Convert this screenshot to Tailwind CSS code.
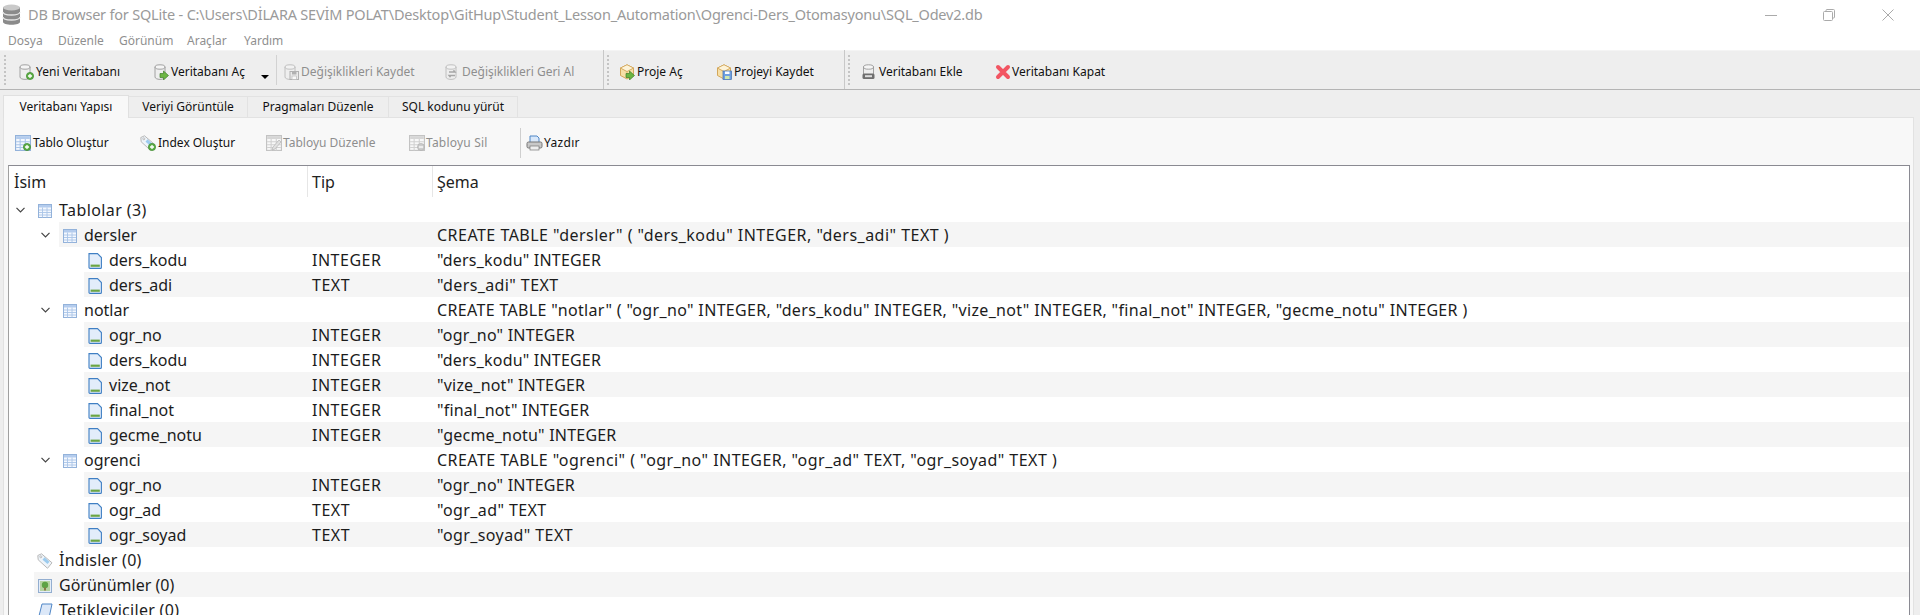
<!DOCTYPE html>
<html lang="tr"><head><meta charset="utf-8"><title>DB Browser for SQLite</title>
<script src="https://cdn.jsdelivr.net/npm/@tailwindcss/browser@4"></script></head>
<body class="w-[1920px] h-[615px] overflow-hidden bg-[#eeeeee] font-['Noto_Sans',sans-serif] text-[#111]">
<svg class="hidden" width="0" height="0">
<defs>
<linearGradient id="c" x1="0" x2="1" y1="0" y2="0"><stop offset="0" stop-color="#c4c4c4"/><stop offset=".5" stop-color="#f6f6f6"/><stop offset="1" stop-color="#b4b4b4"/></linearGradient>
<symbol id="db" viewBox="0 0 16 16"><path d="M2 3v10c0 1.3 2.2 2.4 5 2.4s5-1.100 5-2.400V3z" fill="url(#c)" stroke="#8d8d8d" stroke-width=".8"/><ellipse cx="7" cy="3" rx="5" ry="2.200" fill="#f5f5f5" stroke="#8d8d8d" stroke-width=".8"/></symbol>
<symbol id="plus" viewBox="0 0 16 16"><circle cx="12" cy="12" r="3.600" fill="#5fae46" stroke="#3b8a2c" stroke-width=".7"/><path d="M10 12h4M12 10v4" stroke="#fff" stroke-width="1.300"/></symbol>
<symbol id="arrow" viewBox="0 0 16 16"><path d="M7 9.500h3.500V7l5 4.500-5 4.500v-2.500H7z" fill="#6cb543" stroke="#3f7f2a" stroke-width=".7"/></symbol>
<symbol id="tbl" viewBox="1 1 14 14"><rect x="1.500" y="1.500" width="13" height="13" fill="#f4f8fe" stroke="#93b2da"/><rect x="2" y="2" width="12" height="2.500" fill="#b4cced"/><path d="M2 7h12M2 9.500h12M2 12h12M5.500 4.500v10M10 4.500v10" stroke="#a9c4e8" stroke-width=".9"/></symbol>
<symbol id="fld" viewBox="0 0 14 16"><path d="M1 .6h8.500L13.400 4.500v9.900a1 1 0 0 1-1 1H2a1 1 0 0 1-1-1z" fill="#e3edfa" stroke="#3f7fc4" stroke-width="1.100"/><rect x="2.600" y="11.600" width="9.200" height="2.200" fill="#6ba544"/></symbol>
<symbol id="tag" viewBox="0 0 16 16"><path d="M.8 2.500 4.500.8l10.500 9-4.500 5.500L1.200 6.800z" fill="#eef4fa" stroke="#b8b8b8"/><circle cx="3.800" cy="3.800" r="1" fill="#fff" stroke="#999" stroke-width=".6"/><path d="M6.500 5.500l5 4.300" stroke="#9ccbee" stroke-width="3"/></symbol>
<symbol id="box" viewBox="0 0 16 16"><path d="M8 .8 14.500 4v7.500L8 15 1.500 11.500V4z" fill="#f7dfa6" stroke="#cf9f4d" stroke-width=".9"/><path d="M1.500 4 8 7.500 14.500 4M8 7.500V15" fill="none" stroke="#e0b870" stroke-width=".9"/><path d="M8 .8 14.500 4 8 7.500 1.500 4z" fill="#fdf3d8" stroke="#cf9f4d" stroke-width=".7"/></symbol>
</defs></svg>

<header class="h-[30px] bg-white flex items-center relative">
  <svg class="w-[19px] h-[21px] ml-[2px] mr-[7px] mt-[-1px]" viewBox="0 0 19 21"><path d="M1 3v15c0 1.500 3.600 2.700 8.500 2.700S18 19.500 18 18V3z" fill="#8b8b8b"/><ellipse cx="9.500" cy="3.500" rx="8.500" ry="3" fill="#c9c9c9"/><path d="M1 8c0 1.800 3.600 3 8.500 3S18 9.800 18 8M1 13c0 1.800 3.600 3 8.500 3s8.500-1.200 8.500-3" fill="none" stroke="#e5e5e5" stroke-width="1.300"/></svg>
  <span class="text-[14.5px] text-[#9a9a9a] whitespace-nowrap tracking-[-0.2px]">DB Browser for SQLite - C:\Users\DİLARA SEVİM POLAT\Desktop\GitHup\Student_Lesson_Automation\Ogrenci-Ders_Otomasyonu\SQL_Odev2.db</span>
  <div class="ml-auto flex items-center pr-[26px] text-[#9a9a9a]">
    <svg class="w-[12px] h-[12px] mr-[46px]" viewBox="0 0 12 12"><path d="M0 6.500h12" stroke="#aaa"/></svg>
    <svg class="w-[12px] h-[12px] mr-[47px]" viewBox="0 0 12 12"><rect x=".5" y="2.500" width="9" height="9" rx="1" fill="none" stroke="#aaa"/><path d="M3 2.500V1.500a1 1 0 0 1 1-1h6.500a1 1 0 0 1 1 1V8a1 1 0 0 1-1 1h-1" fill="none" stroke="#aaa"/></svg>
    <svg class="w-[12px] h-[12px]" viewBox="0 0 12 12"><path d="M.5.500l11 11M11.500.500l-11 11" stroke="#aaa"/></svg>
  </div>
</header>
<nav class="h-[20px] bg-white flex items-center text-[12px] text-[#8f8f8f] pl-[8px] pt-[1px]">
  <span class="w-[50px]">Dosya</span><span class="w-[61px]">Düzenle</span><span class="w-[68px]">Görünüm</span><span class="w-[57px]">Araçlar</span><span>Yardım</span>
</nav>
<div class="h-[1px] bg-[#f4f4f4]"></div>

<div class="h-[39px] bg-[#eeeeee] border-b border-[#b4b4b4] flex items-center pt-[4px] text-[12px] text-[#111] whitespace-nowrap">
  <div class="w-[18px] pl-[4px]"><div class="h-[30px] w-[2px] border-l-2 border-dotted border-[#c4c4c4] mt-[-4px]"></div></div>
  <div class="w-[135px] flex items-center gap-[2px]"><svg class="w-[16px] h-[16px]"><use href="#db"/><use href="#plus"/></svg>Yeni Veritabanı</div>
  <div class="w-[123px] flex items-center gap-[2px] relative"><svg class="w-[16px] h-[16px]"><use href="#db"/><use href="#arrow"/></svg>Veritabanı Aç<div class="absolute left-[108px] top-[12px] w-0 h-0 border-x-[4px] border-x-transparent border-t-[4px] border-t-black"></div></div>
  <div class="w-[7px]"><div class="h-[30px] w-[1px] bg-[#d2d2d2] mt-[-4px]"></div></div>
  <div class="w-[161px] flex items-center gap-[2px] text-[#8e8e8e]"><svg class="w-[16px] h-[16px] opacity-60" viewBox="0 0 16 16"><use href="#db" width="16" height="16"/><rect x="7" y="7.500" width="8.500" height="8" fill="#e8e8e8" stroke="#8a8a8a"/><rect x="9" y="8" width="4.500" height="2.500" fill="#8a8a8a"/><rect x="9" y="12" width="4.500" height="3.500" fill="#fff" stroke="#8a8a8a" stroke-width=".6"/></svg>Değişiklikleri Kaydet</div>
  <div class="w-[159px] flex items-center gap-[2px] text-[#8e8e8e]"><svg class="w-[16px] h-[16px] opacity-60" viewBox="0 0 16 16"><use href="#db" width="16" height="16"/><path d="M5 8h6l-1.500-1.800M11 11.500H5l1.500 1.800" fill="none" stroke="#777" stroke-width="1.400"/></svg>Değişiklikleri Geri Al</div>
  <div class="w-[4px]"><div class="h-[39px] w-[1px] bg-[#c8c8c8] mt-[-5px]"></div></div>
  <div class="w-[12px]"><div class="h-[30px] w-[2px] border-l-2 border-dotted border-[#c4c4c4] mt-[-4px]"></div></div>
  <div class="w-[97px] flex items-center gap-[2px]"><svg class="w-[16px] h-[16px]"><use href="#box"/><use href="#arrow"/></svg>Proje Aç</div>
  <div class="w-[128px] flex items-center gap-[2px]"><svg class="w-[16px] h-[16px]" viewBox="0 0 16 16"><use href="#box" width="16" height="16"/><rect x="7" y="7" width="8.500" height="8.500" fill="#6f9fe0" stroke="#3f6fb0" stroke-width=".7"/><rect x="9" y="7.500" width="4.500" height="2.500" fill="#fff"/><rect x="9" y="12" width="4.500" height="3" fill="#cfe8b0"/></svg>Projeyi Kaydet</div>
  <div class="w-[4px]"><div class="h-[39px] w-[1px] bg-[#c8c8c8] mt-[-5px]"></div></div>
  <div class="w-[13px]"><div class="h-[30px] w-[2px] border-l-2 border-dotted border-[#c4c4c4] mt-[-4px]"></div></div>
  <div class="w-[134px] flex items-center gap-[2px]"><svg class="w-[16px] h-[16px]" viewBox="0 0 16 16"><path d="M2.500 3v9h10V3z" fill="url(#c)" stroke="#8d8d8d" stroke-width=".8"/><ellipse cx="7.500" cy="3" rx="5" ry="2.200" fill="#f5f5f5" stroke="#8d8d8d" stroke-width=".8"/><rect x="1.500" y="9.500" width="12" height="5.500" rx="1.500" fill="#6f6f6f"/><rect x="4" y="11.200" width="7" height="2" fill="#ddd"/></svg>Veritabanı Ekle</div>
  <div class="flex items-center gap-[1px]"><svg class="w-[16px] h-[16px]" viewBox="0 0 16 16"><path d="M3 3l10 10M13 3 3 13" stroke="#f25562" stroke-width="4" stroke-linecap="round"/></svg>Veritabanı Kapat</div>
</div>

<div class="h-[27px] flex items-end pl-[3px] text-[12px] text-[#111] whitespace-nowrap">
  <div class="w-[126px] h-[23px] mb-[-1px] relative bg-[#f8f8f8] border-x border-t border-[#e0e0e0] flex items-center justify-center">Veritabanı Yapısı</div>
  <div class="w-[119px] h-[21px] border-t border-r border-[#e2e2e2] flex items-center justify-center">Veriyi Görüntüle</div>
  <div class="w-[141px] h-[21px] border-t border-r border-[#e2e2e2] flex items-center justify-center">Pragmaları Düzenle</div>
  <div class="w-[129px] h-[21px] border-t border-r border-[#e2e2e2] flex items-center justify-center">SQL kodunu yürüt</div>
</div>

<main class="ml-[3px] w-[1911px] h-[498px] bg-[#f8f8f8] border-x border-t border-[#e2e2e2]">
  <div class="h-[47px] flex items-center text-[12px] whitespace-nowrap pt-[2px]">
    <div class="w-[11px]"></div>
    <div class="w-[125px] flex items-center gap-[2px]"><svg class="w-[16px] h-[16px]"><use href="#tbl"/><use href="#plus"/></svg>Tablo Oluştur</div>
    <div class="w-[126px] flex items-center gap-[2px]"><svg class="w-[16px] h-[16px]"><use href="#tag"/><use href="#plus"/></svg>Index Oluştur</div>
    <div class="w-[143px] flex items-center gap-[1px] text-[#8e8e8e]"><svg class="w-[16px] h-[16px] opacity-70 grayscale" viewBox="0 0 16 16"><use href="#tbl" width="16" height="16"/><path d="M7 12l6-7 2 2-6 7-3 1z" fill="#d8d8d8" stroke="#999" stroke-width=".7"/></svg>Tabloyu Düzenle</div>
    <div class="w-[111px] flex items-center gap-[1px] text-[#8e8e8e] tracking-[.2px]"><svg class="w-[16px] h-[16px] opacity-70 grayscale" viewBox="0 0 16 16"><use href="#tbl" width="16" height="16"/><circle cx="12" cy="12" r="3.500" fill="#bbb" stroke="#888" stroke-width=".6"/><path d="M10 12h4" stroke="#fff" stroke-width="1.300"/></svg>Tabloyu Sil</div>
    <div class="w-[6px]"><div class="h-[30px] w-[1px] bg-[#cfcfcf]"></div></div>
    <div class="flex items-center gap-[1px] tracking-[.3px]"><svg class="w-[17px] h-[16px]" viewBox="0 0 17 16"><path d="M4 1h7l2 2v5H4z" fill="#d9e8fa" stroke="#4f86c6"/><rect x="1" y="7" width="15" height="6" rx="1.500" fill="#c8c8c8" stroke="#777"/><rect x="4" y="11" width="9" height="4" fill="#eee" stroke="#777" stroke-width=".7"/></svg>Yazdır</div>
  </div>
  <section class="ml-[4px] w-[1902px] h-[460px] bg-white border-t border-x border-l-[#a0a0a0] border-t-[#8a8a92] border-r-[#8a8a92] text-[16px] leading-[25px] whitespace-nowrap text-[#1c1c1c] overflow-hidden">
    <div class="h-[31px] flex text-[#222]">
      <div class="w-[299px] pl-[5px] pt-[2px] border-r border-[#e6e6e6] flex items-center">İsim</div>
      <div class="w-[125px] pl-[4px] pt-[2px] border-r border-[#e6e6e6] flex items-center">Tip</div>
      <div class="pl-[4px] pt-[2px] flex items-center">Şema</div>
    </div>
    <div class="h-[25px] flex"><div class="w-[25px] flex items-center pl-[7px]"><svg class="w-[9px] h-[6px]" viewBox="0 0 9 6"><path d="M.5.800 4.500 4.800 8.500.800" fill="none" stroke="#444" stroke-width="1.200"/></svg></div><div class="flex flex-1 items-center pt-[2px]"><div class="w-[274px] flex items-center pl-[4px] tracking-[.4px]"><svg class="w-[14px] h-[14px] mr-[7px]"><use href="#tbl"/></svg>Tablolar (3)</div></div></div>
    <div class="h-[25px] flex"><div class="w-[50px] flex items-center pl-[32px]"><svg class="w-[9px] h-[6px]" viewBox="0 0 9 6"><path d="M.5.800 4.500 4.800 8.500.800" fill="none" stroke="#444" stroke-width="1.200"/></svg></div><div class="flex flex-1 items-center bg-[#f5f5f5] pt-[2px]"><div class="w-[249px] flex items-center pl-[4px]"><svg class="w-[14px] h-[14px] mr-[7px]"><use href="#tbl"/></svg>dersler</div><div class="w-[125px]"></div><div class="pl-[4px] tracking-[.48px]">CREATE TABLE "dersler" ( "ders_kodu" INTEGER, "ders_adi" TEXT )</div></div></div>
    <div class="h-[25px] flex"><div class="w-[75px]"></div><div class="flex flex-1 items-center pt-[2px]"><div class="w-[224px] flex items-center pl-[4px]"><svg class="w-[14px] h-[16px] mr-[7px]"><use href="#fld"/></svg>ders_kodu</div><div class="w-[125px] pl-[4px] tracking-[.5px]">INTEGER</div><div class="pl-[4px] tracking-[.2px]">"ders_kodu" INTEGER</div></div></div>
    <div class="h-[25px] flex"><div class="w-[75px]"></div><div class="flex flex-1 items-center bg-[#f5f5f5] pt-[2px]"><div class="w-[224px] flex items-center pl-[4px]"><svg class="w-[14px] h-[16px] mr-[7px]"><use href="#fld"/></svg>ders_adi</div><div class="w-[125px] pl-[4px] tracking-[.5px]">TEXT</div><div class="pl-[4px] tracking-[.4px]">"ders_adi" TEXT</div></div></div>
    <div class="h-[25px] flex"><div class="w-[50px] flex items-center pl-[32px]"><svg class="w-[9px] h-[6px]" viewBox="0 0 9 6"><path d="M.5.800 4.500 4.800 8.500.800" fill="none" stroke="#444" stroke-width="1.200"/></svg></div><div class="flex flex-1 items-center pt-[2px]"><div class="w-[249px] flex items-center pl-[4px]"><svg class="w-[14px] h-[14px] mr-[7px]"><use href="#tbl"/></svg>notlar</div><div class="w-[125px]"></div><div class="pl-[4px] tracking-[.34px]">CREATE TABLE "notlar" ( "ogr_no" INTEGER, "ders_kodu" INTEGER, "vize_not" INTEGER, "final_not" INTEGER, "gecme_notu" INTEGER )</div></div></div>
    <div class="h-[25px] flex"><div class="w-[75px]"></div><div class="flex flex-1 items-center bg-[#f5f5f5] pt-[2px]"><div class="w-[224px] flex items-center pl-[4px]"><svg class="w-[14px] h-[16px] mr-[7px]"><use href="#fld"/></svg>ogr_no</div><div class="w-[125px] pl-[4px] tracking-[.5px]">INTEGER</div><div class="pl-[4px] tracking-[.2px]">"ogr_no" INTEGER</div></div></div>
    <div class="h-[25px] flex"><div class="w-[75px]"></div><div class="flex flex-1 items-center pt-[2px]"><div class="w-[224px] flex items-center pl-[4px]"><svg class="w-[14px] h-[16px] mr-[7px]"><use href="#fld"/></svg>ders_kodu</div><div class="w-[125px] pl-[4px] tracking-[.5px]">INTEGER</div><div class="pl-[4px] tracking-[.2px]">"ders_kodu" INTEGER</div></div></div>
    <div class="h-[25px] flex"><div class="w-[75px]"></div><div class="flex flex-1 items-center bg-[#f5f5f5] pt-[2px]"><div class="w-[224px] flex items-center pl-[4px]"><svg class="w-[14px] h-[16px] mr-[7px]"><use href="#fld"/></svg>vize_not</div><div class="w-[125px] pl-[4px] tracking-[.5px]">INTEGER</div><div class="pl-[4px] tracking-[.2px]">"vize_not" INTEGER</div></div></div>
    <div class="h-[25px] flex"><div class="w-[75px]"></div><div class="flex flex-1 items-center pt-[2px]"><div class="w-[224px] flex items-center pl-[4px]"><svg class="w-[14px] h-[16px] mr-[7px]"><use href="#fld"/></svg>final_not</div><div class="w-[125px] pl-[4px] tracking-[.5px]">INTEGER</div><div class="pl-[4px] tracking-[.2px]">"final_not" INTEGER</div></div></div>
    <div class="h-[25px] flex"><div class="w-[75px]"></div><div class="flex flex-1 items-center bg-[#f5f5f5] pt-[2px]"><div class="w-[224px] flex items-center pl-[4px]"><svg class="w-[14px] h-[16px] mr-[7px]"><use href="#fld"/></svg>gecme_notu</div><div class="w-[125px] pl-[4px] tracking-[.5px]">INTEGER</div><div class="pl-[4px] tracking-[.2px]">"gecme_notu" INTEGER</div></div></div>
    <div class="h-[25px] flex"><div class="w-[50px] flex items-center pl-[32px]"><svg class="w-[9px] h-[6px]" viewBox="0 0 9 6"><path d="M.5.800 4.500 4.800 8.500.800" fill="none" stroke="#444" stroke-width="1.200"/></svg></div><div class="flex flex-1 items-center pt-[2px]"><div class="w-[249px] flex items-center pl-[4px]"><svg class="w-[14px] h-[14px] mr-[7px]"><use href="#tbl"/></svg>ogrenci</div><div class="w-[125px]"></div><div class="pl-[4px] tracking-[.46px]">CREATE TABLE "ogrenci" ( "ogr_no" INTEGER, "ogr_ad" TEXT, "ogr_soyad" TEXT )</div></div></div>
    <div class="h-[25px] flex"><div class="w-[75px]"></div><div class="flex flex-1 items-center bg-[#f5f5f5] pt-[2px]"><div class="w-[224px] flex items-center pl-[4px]"><svg class="w-[14px] h-[16px] mr-[7px]"><use href="#fld"/></svg>ogr_no</div><div class="w-[125px] pl-[4px] tracking-[.5px]">INTEGER</div><div class="pl-[4px] tracking-[.2px]">"ogr_no" INTEGER</div></div></div>
    <div class="h-[25px] flex"><div class="w-[75px]"></div><div class="flex flex-1 items-center pt-[2px]"><div class="w-[224px] flex items-center pl-[4px]"><svg class="w-[14px] h-[16px] mr-[7px]"><use href="#fld"/></svg>ogr_ad</div><div class="w-[125px] pl-[4px] tracking-[.5px]">TEXT</div><div class="pl-[4px] tracking-[.4px]">"ogr_ad" TEXT</div></div></div>
    <div class="h-[25px] flex"><div class="w-[75px]"></div><div class="flex flex-1 items-center bg-[#f5f5f5] pt-[2px]"><div class="w-[224px] flex items-center pl-[4px]"><svg class="w-[14px] h-[16px] mr-[7px]"><use href="#fld"/></svg>ogr_soyad</div><div class="w-[125px] pl-[4px] tracking-[.5px]">TEXT</div><div class="pl-[4px] tracking-[.4px]">"ogr_soyad" TEXT</div></div></div>
    <div class="h-[25px] flex"><div class="w-[25px]"></div><div class="flex flex-1 items-center pl-[3px] pt-[2px] tracking-[.25px]"><svg class="w-[16px] h-[16px] mr-[6px]"><use href="#tag"/></svg>İndisler (0)</div></div>
    <div class="h-[25px] flex"><div class="w-[25px]"></div><div class="flex flex-1 items-center bg-[#f5f5f5] pl-[4px] pt-[2px]"><svg class="w-[14px] h-[14px] mr-[7px]" viewBox="0 0 14 14"><rect x=".5" y=".5" width="13" height="13" fill="#e4edf8" stroke="#93aed0"/><rect x="2" y="2" width="10" height="10" fill="#b6d3a0"/><circle cx="7" cy="6" r="3.200" fill="#5ea344"/><rect x="6" y="8.500" width="2" height="3" fill="#8a7a4a"/></svg>Görünümler (0)</div></div>
    <div class="h-[25px] flex"><div class="w-[25px]"></div><div class="flex flex-1 items-center pl-[3px] pt-[2px] tracking-[.3px]"><svg class="w-[16px] h-[16px] mr-[6px]" viewBox="0 0 16 16"><path d="M5 1h10l-3 14H1.500z" fill="#dce8f8" stroke="#4f86c6"/></svg>Tetikleyiciler (0)</div></div>
  </section>
</main>
</body></html>
